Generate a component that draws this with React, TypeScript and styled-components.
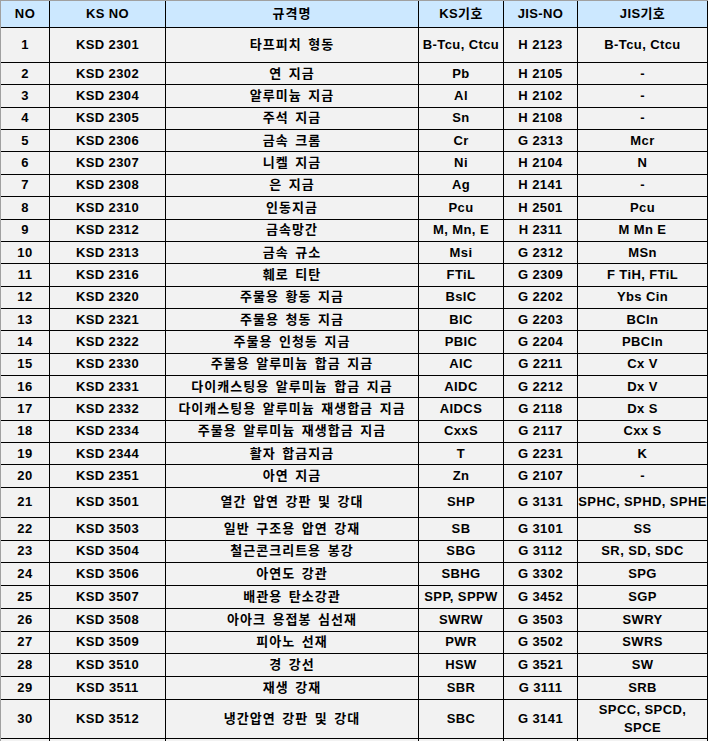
import React from "react";
import styled, { createGlobalStyle } from "styled-components";

const Global = createGlobalStyle`
  html, body { margin: 0; padding: 0; background: #ffffff; }
  body { font-family: "Liberation Sans", Arial, "Noto Sans CJK KR", sans-serif; }
`;

const Table = styled.table`
  border-collapse: separate;
  border-spacing: 0;
  border-top: 1px solid #a0a0a0;
  border-left: 1px solid #a0a0a0;
  table-layout: fixed;
  width: 708px;
  font-family: "Liberation Sans", Arial, "Noto Sans CJK KR", sans-serif;
  font-size: 13px;
  font-weight: 700;
  letter-spacing: 0.4px;
  color: #000;
`;

const HeadCell = styled.th<{ $ko?: boolean }>`
  background: #cce8ff;
  height: 26px;
  padding: 0;
  border-right: 1px solid #000;
  border-bottom: 1px solid #000;
  text-align: center;
  vertical-align: middle;
  font-weight: 700;
  line-height: 16px;
  letter-spacing: ${(p) => (p.$ko ? "1px" : "0.4px")};
`;

const Cell = styled.td<{ $h: number; $ko?: boolean }>`
  background: #f2f2f2;
  height: ${(p) => p.$h}px;
  padding: 0;
  border-right: 1px solid #000;
  border-bottom: 1px solid #000;
  text-align: center;
  vertical-align: middle;
  line-height: 18px;
  white-space: nowrap;
  letter-spacing: ${(p) => (p.$ko ? "1px" : "0.4px")};
  word-spacing: ${(p) => (p.$ko ? "2px" : "0")};
`;

type Row = [string, string, string, string, string, React.ReactNode];

const rows: Row[] = [
  ["1", "KSD 2301", "타프피치 형동", "B-Tcu, Ctcu", "H 2123", "B-Tcu, Ctcu"],
  ["2", "KSD 2302", "연 지금", "Pb", "H 2105", "-"],
  ["3", "KSD 2304", "알루미늄 지금", "Al", "H 2102", "-"],
  ["4", "KSD 2305", "주석 지금", "Sn", "H 2108", "-"],
  ["5", "KSD 2306", "금속 크롬", "Cr", "G 2313", "Mcr"],
  ["6", "KSD 2307", "니켈 지금", "Ni", "H 2104", "N"],
  ["7", "KSD 2308", "은 지금", "Ag", "H 2141", "-"],
  ["8", "KSD 2310", "인동지금", "Pcu", "H 2501", "Pcu"],
  ["9", "KSD 2312", "금속망간", "M, Mn, E", "H 2311", "M Mn E"],
  ["10", "KSD 2313", "금속 규소", "Msi", "G 2312", "MSn"],
  ["11", "KSD 2316", "훼로 티탄", "FTiL", "G 2309", "F TiH, FTiL"],
  ["12", "KSD 2320", "주물용 황동 지금", "BsIC", "G 2202", "Ybs Cin"],
  ["13", "KSD 2321", "주물용 청동 지금", "BIC", "G 2203", "BCIn"],
  ["14", "KSD 2322", "주물용 인청동 지금", "PBIC", "G 2204", "PBCIn"],
  ["15", "KSD 2330", "주물용 알루미늄 합금 지금", "AIC", "G 2211", "Cx V"],
  ["16", "KSD 2331", "다이캐스팅용 알루미늄 합금 지금", "AIDC", "G 2212", "Dx V"],
  ["17", "KSD 2332", "다이캐스팅용 알루미늄 재생합금 지금", "AIDCS", "G 2118", "Dx S"],
  ["18", "KSD 2334", "주물용 알루미늄 재생합금 지금", "CxxS", "G 2117", "Cxx S"],
  ["19", "KSD 2344", "활자 합금지금", "T", "G 2231", "K"],
  ["20", "KSD 2351", "아연 지금", "Zn", "G 2107", "-"],
  ["21", "KSD 3501", "열간 압연 강판 및 강대", "SHP", "G 3131", "SPHC, SPHD, SPHE"],
  ["22", "KSD 3503", "일반 구조용 압연 강재", "SB", "G 3101", "SS"],
  ["23", "KSD 3504", "철근콘크리트용 봉강", "SBG", "G 3112", "SR, SD, SDC"],
  ["24", "KSD 3506", "아연도 강관", "SBHG", "G 3302", "SPG"],
  ["25", "KSD 3507", "배관용 탄소강관", "SPP, SPPW", "G 3452", "SGP"],
  ["26", "KSD 3508", "아아크 용접봉 심선재", "SWRW", "G 3503", "SWRY"],
  ["27", "KSD 3509", "피아노 선재", "PWR", "G 3502", "SWRS"],
  ["28", "KSD 3510", "경 강선", "HSW", "G 3521", "SW"],
  ["29", "KSD 3511", "재생 강재", "SBR", "G 3111", "SRB"],
  [
    "30",
    "KSD 3512",
    "냉간압연 강판 및 강대",
    "SBC",
    "G 3141",
    <>
      SPCC, SPCD,
      <br />
      SPCE
    </>,
  ],
];

const heightFor = (no: string) => {
  const n = Number(no);
  if (n === 1) return 34;
  if (n === 21) return 29;
  if (n === 30) return 38;
  if (n < 21) return 21.37;
  return 21.75;
};

const widths = [49, 116, 253, 85, 74, 130];
const headers = ["NO", "KS NO", "규격명", "KS기호", "JIS-NO", "JIS기호"];

export default function App() {
  return (
    <>
      <Global />
      <Table>
        <colgroup>
          {widths.map((w, i) => (
            <col key={i} style={{ width: w }} />
          ))}
        </colgroup>
        <thead>
          <tr>
            {headers.map((h, i) => (
              <HeadCell key={h} $ko={i === 2}>
                {h}
              </HeadCell>
            ))}
          </tr>
        </thead>
        <tbody>
          {rows.map((r) => (
            <tr key={r[0]}>
              {r.map((c, i) => (
                <Cell key={i} $h={heightFor(r[0])} $ko={i === 2}>
                  {c}
                </Cell>
              ))}
            </tr>
          ))}
          <tr>
            {widths.map((_, i) => (
              <Cell key={i} $h={21}>
                {"\u00a0"}
              </Cell>
            ))}
          </tr>
        </tbody>
      </Table>
    </>
  );
}
